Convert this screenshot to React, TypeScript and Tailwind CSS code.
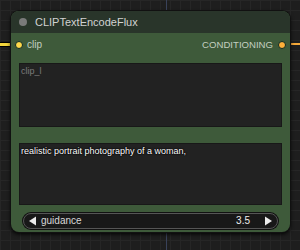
export default function App() {
  return (
    <div className="relative h-[250px] w-[300px] overflow-hidden bg-[#1e1e1e] bg-[linear-gradient(#262626_1px,transparent_1px),linear-gradient(90deg,#262626_1px,transparent_1px)] bg-[size:10px_10px] font-['Liberation_Sans',Arial,sans-serif]">
      {/* wires behind the node */}
      <div className="absolute left-[166px] top-0 h-full w-px bg-[#39425a]" />
      <div className="absolute left-0 top-[43px] h-[3px] w-[16px] bg-[#f2d43c] shadow-[0_0_0_1px_#000]" />
      <div className="absolute left-[288px] top-[43px] h-[2px] w-[14px] bg-[#f6a93a]" />

      <div className="absolute left-[11px] top-[11px] flex h-[221px] w-[279px] flex-col overflow-hidden rounded-[8px] bg-[#3e5a3a] shadow-[0_0_0_1px_#111,0_2px_4px_#000]">
        {/* title */}
        <div className="flex h-[22px] items-center bg-[#29352a] pl-[8px]">
          <div className="h-[8px] w-[8px] rounded-full bg-[#7a7a7a]" />
          <span className="ml-[8px] text-[11px] leading-none text-[#d2d2d2]">
            CLIPTextEncodeFlux
          </span>
        </div>

        {/* slots */}
        <div className="flex h-[24px] items-center justify-between px-[4px]">
          <div className="flex items-center gap-[4px]">
            <div className="h-[8px] w-[8px] rounded-full border border-[#0c2a26] bg-[#ffd84a]" />
            <span className="text-[10px] leading-none text-[#c4cfc0]">clip</span>
          </div>
          <div className="flex items-center gap-[5px]">
            <span className="text-[9.6px] leading-none text-[#c4cfc0]">CONDITIONING</span>
            <div className="h-[8px] w-[8px] rounded-full border border-[#0c2a26] bg-[#ffb03a]" />
          </div>
        </div>

        {/* text areas */}
        <div className="mx-[8px] mt-[6px] h-[64px] border border-[#181818] bg-[#222222] px-[1px] py-[1px] text-[9px] leading-[12px] text-[#7c7c7c]">
          clip_l
        </div>
        <div className="mx-[8px] mt-[16px] h-[62px] border border-[#181818] bg-[#222222] px-[1px] py-[1px] text-[9px] leading-[12px] text-white [text-shadow:0_0_2px_#000,0_0_1px_#000,0_0_1px_#000]">
          realistic portrait photography of a woman,
        </div>

        {/* slider */}
        <div className="mx-[12px] mt-[8px] flex h-[16px] items-center rounded-full border border-[#555555] bg-[#181818] px-[4px] shadow-[0_0_0_1px_#111]">
          <svg width="9" height="10" viewBox="0 0 9 10">
            <path d="M8 0.5 L1 5 L8 9.5 Z" fill="#ececec" />
          </svg>
          <span className="ml-[4px] text-[10px] leading-none text-[#d8d8d8]">guidance</span>
          <span className="ml-auto text-[10px] leading-none text-[#ededed]">3.5</span>
          <svg className="ml-[14px]" width="9" height="10" viewBox="0 0 9 10">
            <path d="M1 0.5 L8 5 L1 9.5 Z" fill="#ececec" />
          </svg>
        </div>
      </div>
    </div>
  );
}
